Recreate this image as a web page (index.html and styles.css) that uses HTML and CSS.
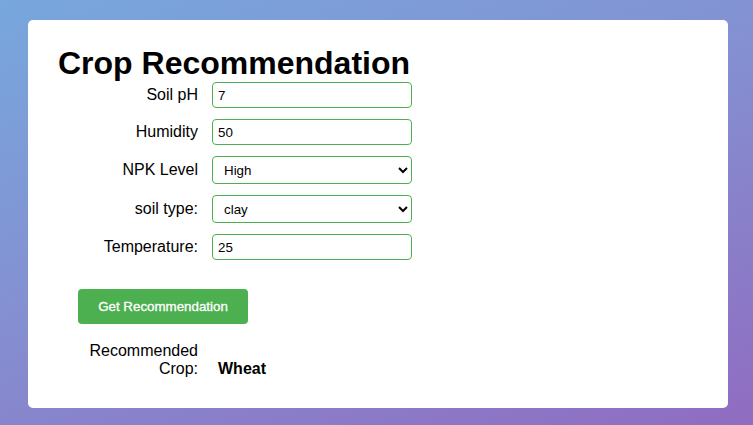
FILE: index.html
```html
<!DOCTYPE html>
<html>
<head>
<meta charset="utf-8">
<link rel="stylesheet" href="styles.css">
</head>
<body>
<div class="card">
  <h1 class="title">Crop Recommendation</h1>
  <form class="form">
    <div class="row">
      <label class="label">Soil pH</label>
      <input class="field" type="text" value="7">
    </div>
    <div class="row">
      <label class="label">Humidity</label>
      <input class="field" type="text" value="50">
    </div>
    <div class="row">
      <label class="label">NPK Level</label>
      <select class="field select"><option>High</option></select>
    </div>
    <div class="row">
      <label class="label">soil type:</label>
      <select class="field select"><option>clay</option></select>
    </div>
    <div class="row">
      <label class="label">Temperature:</label>
      <input class="field" type="text" value="25">
    </div>
    <div class="actions">
      <button class="btn" type="button">Get Recommendation</button>
    </div>
    <div class="result">
      <span class="label">Recommended Crop:</span>
      <span class="value">Wheat</span>
    </div>
  </form>
</div>
</body>
</html>
```
FILE: styles.css
```css
html, body {
  margin: 0;
  padding: 0;
}
body {
  width: 753px;
  height: 425px;
  background: linear-gradient(160deg, #77a7dd 0%, #8490d2 45%, #906cc0 100%);
  font-family: "Liberation Sans", Arial, sans-serif;
  padding: 20px 25px 17px 28px;
  box-sizing: border-box;
}
.card {
  width: 700px;
  height: 388px;
  background: #fff;
  border-radius: 5px;
  padding: 25px 30px 0 30px;
  box-sizing: border-box;
}
.title {
  margin: 0;
  font-size: 32px;
  font-weight: bold;
  color: #000;
  line-height: 37px;
}
.form {
  display: flex;
  flex-direction: column;
}
.row {
  display: flex;
  align-items: center;
  margin-bottom: 11px;
}
.label {
  width: 140px;
  text-align: right;
  font-size: 16px;
  color: #000;
  line-height: 18px;
  flex-shrink: 0;
}
.field {
  margin-left: 14px;
  width: 200px;
  height: 26px;
  box-sizing: border-box;
  border: 1px solid #4caf50;
  border-radius: 4px;
  padding: 0 5px;
  font-family: "Liberation Sans", Arial, sans-serif;
  font-size: 13.33px;
  color: #000;
  background: #fff;
  outline: none;
}
.select {
  height: 28px;
  padding: 0 7px;
}
.actions {
  padding: 18px 0 0 20px;
}
.btn {
  width: 170px;
  height: 35px;
  background: #4caf50;
  color: #fff;
  border: none;
  border-radius: 4px;
  font-family: "Liberation Sans", Arial, sans-serif;
  font-size: 13.33px;
  font-weight: normal;
  -webkit-text-stroke: 0.3px #fff;
  padding: 0;
}
.result {
  display: flex;
  align-items: flex-end;
  margin-top: 18px;
}
.value {
  margin-left: 20px;
  font-size: 16px;
  font-weight: bold;
  line-height: 18px;
}
```
